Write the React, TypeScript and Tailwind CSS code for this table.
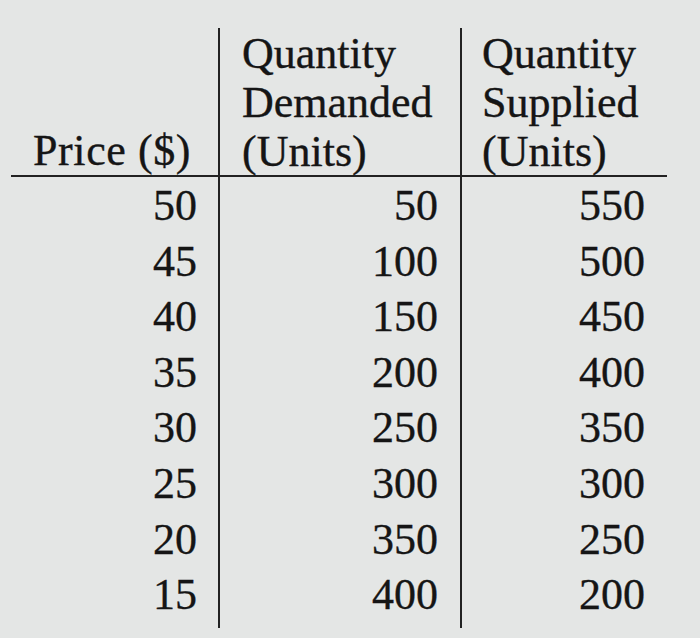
import React from "react";

const prices = [50, 45, 40, 35, 30, 25, 20, 15];
const demanded = [50, 100, 150, 200, 250, 300, 350, 400];
const supplied = [550, 500, 450, 400, 350, 300, 250, 200];

function Numbers({ values }: { values: number[] }) {
  return (
    <div className="flex flex-col pt-[1px] pb-[5px]">
      {values.map((v, i) => (
        <div key={i} className="leading-[55.6px] text-right">
          {v}
        </div>
      ))}
    </div>
  );
}

export default function App() {
  return (
    <div
      className="w-[700px] h-[638px] bg-[#e4e6e5] pl-[11px] pt-[28px] text-[#151515] text-[44px] [-webkit-text-stroke:0.35px_#151515]"
      style={{ fontFamily: '"Liberation Serif", "Times New Roman", serif' }}
    >
      <div className="grid grid-cols-[209px_242px_205px] w-[656px]">
        {/* Header row */}
        <div className="border-r-2 border-b-2 border-[#222222] h-[149px] flex items-end pl-[22px] pt-[1px]">
          <div className="leading-[49px] tracking-[0.6px]">Price ($)</div>
        </div>
        <div className="border-r-2 border-b-2 border-[#222222] h-[149px] pl-[22px] pt-[1px]">
          <div className="leading-[49px]">Quantity</div>
          <div className="leading-[49px]">Demanded</div>
          <div className="leading-[49px]">(Units)</div>
        </div>
        <div className="border-b-2 border-[#222222] h-[149px] pl-[20px] pt-[1px]">
          <div className="leading-[49px]">Quantity</div>
          <div className="leading-[49px]">Supplied</div>
          <div className="leading-[49px]">(Units)</div>
        </div>

        {/* Data */}
        <div className="border-r-2 border-[#222222] pr-[21px]">
          <Numbers values={prices} />
        </div>
        <div className="border-r-2 border-[#222222] pr-[22px]">
          <Numbers values={demanded} />
        </div>
        <div className="pr-[22px]">
          <Numbers values={supplied} />
        </div>
      </div>
    </div>
  );
}
